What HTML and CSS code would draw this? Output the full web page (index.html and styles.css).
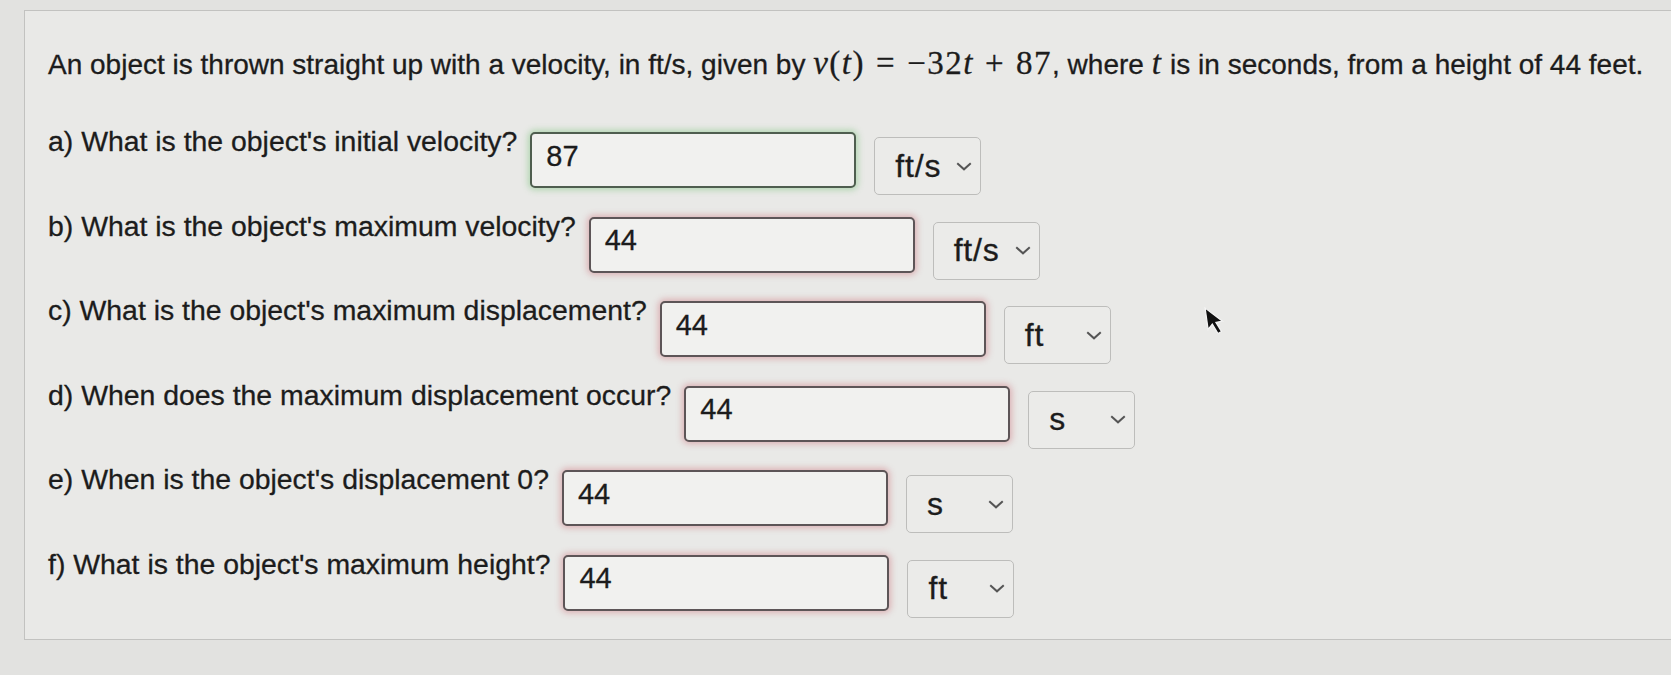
FILE: index.html
```html
<!DOCTYPE html>
<html lang="en">
<head>
<meta charset="utf-8">
<title>Vertical motion</title>
<link rel="stylesheet" href="styles.css">
</head>
<body>
<div class="card">
  <p class="prompt">An object is thrown straight up with a velocity, in ft/s, given by <span class="math"><i>v</i>(<i>t</i>)<span class="op">=</span>−32<i>t</i><span class="op">+</span>87</span>, where <span class="math"><i>t</i></span> is in seconds, from a height of 44 feet.</p>

  <div class="rows">
    <div class="row">
      <span class="label">a) What is the object's initial velocity?</span>
      <div class="answer correct">87</div>
      <div class="unit"><span>ft/s</span><svg class="chev" viewBox="0 0 14 8"><path d="M1 1.2 L7 6.5 L13 1.2"/></svg></div>
    </div>
    <div class="row">
      <span class="label">b) What is the object's maximum velocity?</span>
      <div class="answer wrong">44</div>
      <div class="unit"><span>ft/s</span><svg class="chev" viewBox="0 0 14 8"><path d="M1 1.2 L7 6.5 L13 1.2"/></svg></div>
    </div>
    <div class="row">
      <span class="label">c) What is the object's maximum displacement?</span>
      <div class="answer wrong">44</div>
      <div class="unit"><span>ft</span><svg class="chev" viewBox="0 0 14 8"><path d="M1 1.2 L7 6.5 L13 1.2"/></svg></div>
    </div>
    <div class="row">
      <span class="label">d) When does the maximum displacement occur?</span>
      <div class="answer wrong">44</div>
      <div class="unit"><span>s</span><svg class="chev" viewBox="0 0 14 8"><path d="M1 1.2 L7 6.5 L13 1.2"/></svg></div>
    </div>
    <div class="row">
      <span class="label">e) When is the object's displacement 0?</span>
      <div class="answer wrong">44</div>
      <div class="unit"><span>s</span><svg class="chev" viewBox="0 0 14 8"><path d="M1 1.2 L7 6.5 L13 1.2"/></svg></div>
    </div>
    <div class="row">
      <span class="label">f) What is the object's maximum height?</span>
      <div class="answer wrong">44</div>
      <div class="unit"><span>ft</span><svg class="chev" viewBox="0 0 14 8"><path d="M1 1.2 L7 6.5 L13 1.2"/></svg></div>
    </div>
  </div>
</div>
<svg class="cursor" viewBox="0 0 16 26"><path d="M1.5 1.5 L1.5 19 L5.5 15.2 L9 23.5 L12 22.2 L8.6 14.2 L14 14 Z"/></svg>
</body>
</html>
```

FILE: styles.css
```css
html, body {
  margin: 0;
  padding: 0;
  height: 100%;
  overflow: hidden;
}

body {
  background: #e2e2e0;
  font-family: "Liberation Sans", Arial, sans-serif;
  color: #1c1c1c;
  position: relative;
}

.card {
  margin: 10px 0 0 24px;
  height: 630px;
  box-sizing: border-box;
  background: #e9e9e7;
  border: 1px solid #c2c2c0;
  border-right: none;
  padding: 35px 0 0 23px;
  -webkit-text-stroke: 0.3px #1c1c1c;
}

.prompt {
  margin: 0;
  font-size: 28px;
  line-height: 34px;
  white-space: nowrap;
}

.math {
  font-family: "Liberation Serif", "DejaVu Serif", serif;
  font-size: 33px;
  letter-spacing: 1.5px;
}

.math i {
  font-style: italic;
}

.op {
  padding: 0 11px;
}

.rows {
  margin-top: 42px;
  display: flex;
  flex-direction: column;
  gap: 13.6px;
}

.row {
  display: flex;
  align-items: flex-start;
  height: 71px;
}

.label {
  font-size: 28.4px;
  line-height: 34px;
  white-space: nowrap;
}

.answer {
  margin-left: 13px;
  margin-top: 8px;
  width: 326px;
  height: 56px;
  box-sizing: border-box;
  background: #f1f1ef;
  border: 2px solid #5d5557;
  border-radius: 5px;
  font-size: 29px;
  padding: 0 0 8px 14px;
  display: flex;
  align-items: center;
}

.answer.wrong {
  box-shadow: 0 0 6px 2px rgba(205, 110, 120, 0.45);
}

.answer.correct {
  border-color: #4f5e4f;
  box-shadow: 0 0 6px 2px rgba(110, 190, 110, 0.45);
}

.unit {
  margin-left: 18px;
  margin-top: 13px;
  width: 107px;
  height: 58px;
  box-sizing: border-box;
  background: #ebebe9;
  border: 1.5px solid #bdbdbb;
  border-radius: 5px;
  display: flex;
  align-items: center;
  justify-content: space-between;
  padding: 0 8px 0 20px;
  font-size: 32px;
  letter-spacing: 0.8px;
}

.chev {
  width: 16px;
  height: 9px;
  fill: none;
  stroke: #555;
  stroke-width: 1.8;
}

.cursor {
  position: absolute;
  left: 1205px;
  top: 305px;
  width: 20px;
  height: 32px;
  fill: #111;
  stroke: #f4f4f4;
  stroke-width: 1;
  transform: rotate(-8deg);
}
```
